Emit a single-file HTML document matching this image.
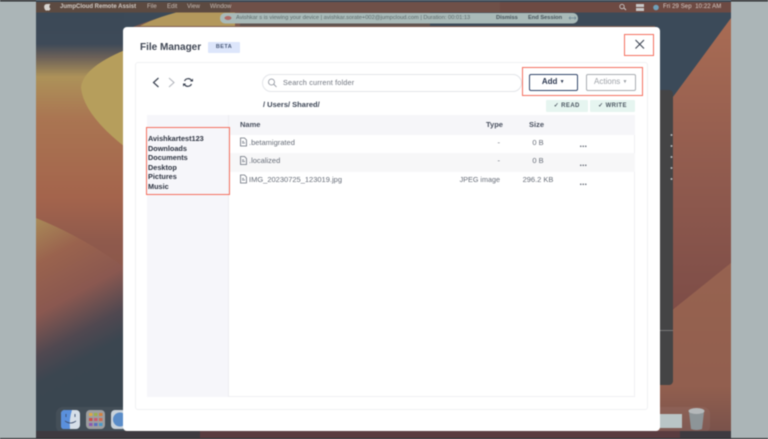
<!DOCTYPE html>
<html><head><meta charset="utf-8"><style>
html,body{margin:0;padding:0;width:768px;height:439px;overflow:hidden;background:#abb5b7}
#r{position:relative;width:768px;height:439px;overflow:hidden;font-family:"Liberation Sans",sans-serif;filter:blur(.45px);background:#abb5b7}
.a{position:absolute;white-space:nowrap}
.box{position:absolute;border:1.5px solid #f4705f;box-sizing:border-box}
</style></head><body><div id="r">
<svg class="a" style="left:0;top:0" width="768" height="439" viewBox="0 0 768 439">
<defs>
<linearGradient id="l" x1="0" y1="0" x2="0" y2="1">
<stop offset="0" stop-color="#3a4957"/><stop offset=".10" stop-color="#3e4a58"/><stop offset=".13" stop-color="#6b6058"/><stop offset=".175" stop-color="#ad9259"/><stop offset=".27" stop-color="#aa7552"/><stop offset=".45" stop-color="#a4644c"/><stop offset=".55" stop-color="#8f5a4c"/><stop offset="1" stop-color="#7a4c48"/>
</linearGradient>
<linearGradient id="w" x1="0" y1="0" x2=".22" y2="1">
<stop offset="0" stop-color="#a98a58"/><stop offset=".2" stop-color="#9a634e"/><stop offset=".42" stop-color="#8a5850"/><stop offset=".6" stop-color="#504850"/><stop offset=".72" stop-color="#3b4650"/><stop offset="1" stop-color="#3a4650"/>
</linearGradient>
<linearGradient id="rg" x1="0" y1="0" x2="0" y2="1">
<stop offset="0" stop-color="#a96c54"/><stop offset=".55" stop-color="#8f5a4e"/><stop offset="1" stop-color="#7c4c47"/>
</linearGradient>
<linearGradient id="rb" x1="0" y1="0" x2="0" y2="1">
<stop offset="0" stop-color="#976350"/><stop offset=".7" stop-color="#925f4f"/><stop offset="1" stop-color="#75504a"/>
</linearGradient>
</defs>
<rect width="768" height="439" fill="#abb5b7"/>
<rect x="0" y="0" width="768" height="1.5" fill="#2a2a2c"/>
<rect x="36" y="0" width="695" height="439" fill="url(#l)"/>
<path d="M36 218 Q85 238 125 268 L125 439 L36 439Z" fill="url(#w)"/>
<path d="M125 50 Q82 68 81 88 Q84 115 125 147Z" fill="#b69e5c"/>
<path d="M125 12 H730 V20 L673 97 L660 115 V430 H125Z" fill="#7f5b4e"/>
<rect x="240" y="12" width="490" height="14" fill="#5f5350"/>
<path d="M430 12 H731 V26 H430Z" fill="#3c4a58"/>
<path d="M125 12 H178 Q150 20 125 30Z" fill="#3c4a58"/>
<path d="M178 12 H235 V26 H140 Q155 18 178 12Z" fill="#b3985c"/>
<path d="M731 12 V18 L673 97 L655 100 V26 H660 V12Z" fill="#3b4a59"/>
<path d="M731 18 V263 L660 320 V115Z" fill="url(#rg)"/>
<path d="M731 263 V439 H660 V320Z" fill="url(#rb)"/>
<rect x="36" y="2" width="695" height="10.5" fill="#6f5048"/>
<path d="M36 2 H230 V12.5 H36Z" fill="#5c4a41"/>
<path d="M500 2 H731 V12.5 H500Z" fill="#6d4a43"/>
<rect x="650" y="90" width="23" height="295" rx="4" fill="#444445"/>
<g fill="#b9bcbf"><circle cx="671.5" cy="135" r="1"/><circle cx="671.5" cy="146" r="1"/><circle cx="671.5" cy="157" r="1"/><circle cx="671.5" cy="168" r="1"/><circle cx="671.5" cy="179" r="1"/></g>
<rect x="650" y="330" width="23" height="1" fill="#777"/>
<rect x="56" y="407" width="654" height="26" rx="7" fill="#fff" opacity=".05"/>
<rect x="61" y="410" width="19" height="19" rx="4" fill="#d6dfe8"/>
<path d="M61 414 q0 -4 4 -4 h7 q-3 9 -2 19 h-6 q-3 0 -3 -3Z" fill="#5a90dc"/>
<path d="M65 421 q5.500 4 11 0" fill="none" stroke="#3c4f70" stroke-width=".8"/>
<path d="M66 414 v3 M75 414 v3" stroke="#3c4f70" stroke-width=".9"/>
<rect x="86" y="410" width="19" height="19" rx="4" fill="#9d9ea0"/>
<g><rect x="89" y="413" width="3.5" height="3" fill="#d8a945"/><rect x="94" y="413" width="3.5" height="3" fill="#9ab04c"/><rect x="99" y="413" width="3.5" height="3" fill="#d2813f"/><rect x="89" y="418" width="3.5" height="3" fill="#c8504a"/><rect x="94" y="418" width="3.5" height="3" fill="#c85a70"/><rect x="99" y="418" width="3.5" height="3" fill="#d06a50"/><rect x="89" y="423" width="3.5" height="3" fill="#8a5ab0"/><rect x="94" y="423" width="3.5" height="3" fill="#5a70c0"/><rect x="99" y="423" width="3.5" height="3" fill="#4a9ac8"/></g>
<rect x="111" y="410" width="15" height="19" rx="4" fill="#c9d2da"/><circle cx="120" cy="419.5" r="7" fill="#5a8cc8"/>
<circle cx="70" cy="434" r=".8" fill="#bbb"/>
<rect x="655" y="414" width="27" height="14" fill="#b9c5c6"/>
<path d="M689 412 h15 l-2 17 q-5.500 2 -11 0Z" fill="#8d9598"/><ellipse cx="696.500" cy="411" rx="8" ry="3" fill="#b4b8ba"/>
<rect x="36" y="431" width="695" height="7" fill="#3e3a40"/>
<rect x="200" y="431" width="480" height="7" fill="#5a3c40"/>
<rect x="0" y="438" width="768" height="1" fill="#2a2a2c"/>
<path d="M48 4 q-2 -.2 -3 .6 q-1.500 1.500 -.5 4 q1 2.400 2 2 q1 -.4 2 0 q1 .4 2 -2 q-1.500 -1 -1 -2.800 q.3 -1 1 -1.400 q-1 -.8 -2.500 -.4Z" fill="#d8d4d0"/>
<rect x="220" y="13" width="358" height="10.500" rx="5" fill="#a9bab8"/>
<ellipse cx="228" cy="18" rx="3.500" ry="2" fill="#b06a66"/>
</svg>

<div class="a" style="left:60px;top:3px;font-size:6px;font-weight:bold;line-height:8px;color:#cfc9c4">JumpCloud Remote Assist</div>
<div class="a" style="left:147px;top:3px;font-size:6px;line-height:8px;color:#c6bcb6">File</div>
<div class="a" style="left:167px;top:3px;font-size:6px;line-height:8px;color:#c6bcb6">Edit</div>
<div class="a" style="left:187px;top:3px;font-size:6px;line-height:8px;color:#c6bcb6">View</div>
<div class="a" style="left:210px;top:3px;font-size:6px;line-height:8px;color:#c6bcb6">Window</div>
<div class="a" style="left:663px;top:3px;font-size:6px;line-height:8px;color:#d8cfca;letter-spacing:.1px">Fri 29 Sep&nbsp; 10:22 AM</div>
<svg class="a" style="left:618px;top:3px" width="44" height="9"><circle cx="4" cy="3.500" r="2.200" fill="none" stroke="#ccc" stroke-width=".8"/><path d="M6 5 L8 7" stroke="#ccc"/><rect x="18" y="1" width="8" height="3" fill="#c8c8c8"/><rect x="18" y="5" width="8" height="3" fill="#c8c8c8"/><circle cx="38" cy="4.500" r="2.800" fill="#6f9fb8"/></svg>

<div class="a" style="left:236px;top:14px;font-size:5.700px;line-height:8px;color:#5d6b6c">Avishkar s is viewing your device | avishkar.sorate+002@jumpcloud.com | Duration: 00:01:13</div>
<div class="a" style="left:496px;top:14px;font-size:5.700px;font-weight:bold;line-height:8px;color:#46535a">Dismiss</div>
<div class="a" style="left:528px;top:14px;font-size:5.700px;font-weight:bold;line-height:8px;color:#46535a">End Session</div>
<svg class="a" style="left:568px;top:15px" width="9" height="6"><path d="M1 3 H8 M1 3 l1.500 -1.500 M1 3 l1.500 1.500 M8 3 l-1.500 -1.500 M8 3 l-1.500 1.500" stroke="#6d8794" stroke-width=".7" fill="none"/></svg>

<div class="a" style="left:122.500px;top:26.500px;width:537.500px;height:404px;background:#fff;border-radius:4px"></div>
<div class="a" style="left:140px;top:41px;font-size:10px;font-weight:bold;line-height:13px;color:#3f4654">File Manager</div>
<div class="a" style="left:208px;top:42px;width:32px;height:11px;background:#dde6fb;border-radius:1px;font-size:5.500px;font-weight:bold;line-height:11px;text-align:center;letter-spacing:.4px;color:#4a5a78">BETA</div>
<svg class="a" style="left:624px;top:34px" width="30" height="21"><path d="M11.500 6 L20 14.500 M20 6 L11.500 14.500" stroke="#3e4654" stroke-width="1.100"/></svg>
<div class="box" style="left:624px;top:34px;width:30px;height:21.500px"></div>

<div class="a" style="left:135px;top:61.500px;width:513px;height:348px;border:1px solid #f0f1f3;border-radius:3px;box-sizing:border-box"></div>

<svg class="a" style="left:150px;top:76px" width="48" height="13">
<path d="M8.500 2 L3.500 6.500 L8.500 11" fill="none" stroke="#3c4352" stroke-width="1.200"/>
<path d="M19 2 L24 6.500 L19 11" fill="none" stroke="#b4b7bd" stroke-width="1.100"/>
<path d="M34.500 5 A4 4 0 0 1 41.500 4.500 M41.500 8 A4 4 0 0 1 34.500 8.500" fill="none" stroke="#3c4352" stroke-width="1.200"/>
<path d="M40 5.500 L43 5.500 L43 2.500Z M36 7.500 L33 7.500 L33 10.500Z" fill="#3c4352"/>
</svg>

<div class="a" style="left:262px;top:74px;width:260px;height:17.500px;border:1px solid #e3e5e9;border-radius:9px;box-sizing:border-box"></div>
<svg class="a" style="left:267px;top:78px" width="11" height="10"><circle cx="4.500" cy="4" r="3" fill="none" stroke="#8a8f99" stroke-width=".8"/><path d="M6.800 6.300 L9.500 9" stroke="#8a8f99" stroke-width=".8"/></svg>
<div class="a" style="left:283px;top:78px;font-size:7.300px;line-height:10px;color:#70757f;letter-spacing:.15px">Search current folder</div>

<div class="a" style="left:529px;top:74px;width:48.500px;height:16.500px;border:1.300px solid #33476b;border-radius:2px;box-sizing:border-box;font-size:8px;font-weight:bold;line-height:14px;text-align:center;color:#2e3a52">Add <span style="font-size:5px;vertical-align:1px">▼</span></div>
<div class="a" style="left:586px;top:74px;width:49.500px;height:16.500px;border:1.300px solid #a9adb2;border-radius:2px;box-sizing:border-box;font-size:8px;line-height:14px;text-align:center;color:#9ea2a8">Actions <span style="font-size:5px;vertical-align:1px">▼</span></div>
<div class="box" style="left:522px;top:67px;width:121px;height:29px"></div>

<div class="a" style="left:546px;top:99.500px;width:41.500px;height:12px;background:#e6f5f0;border-radius:1px;font-size:6px;font-weight:bold;line-height:12px;text-align:center;letter-spacing:.4px;color:#4a5560">✓ READ</div>
<div class="a" style="left:590px;top:99.500px;width:45px;height:12px;background:#e6f5f0;border-radius:1px;font-size:6px;font-weight:bold;line-height:12px;text-align:center;letter-spacing:.4px;color:#4a5560">✓ WRITE</div>

<div class="a" style="left:263px;top:100px;font-size:7.500px;font-weight:bold;line-height:10px;color:#3d4656">/ Users/ Shared/</div>

<div class="a" style="left:147px;top:115px;width:488px;height:282px;border:1px solid #f0f0f3;box-sizing:border-box"></div>
<div class="a" style="left:147px;top:115px;width:82px;height:282px;background:#f6f6fa;border-right:1px solid #eeeef2;box-sizing:border-box"></div>
<div class="a" style="left:229px;top:115px;width:406px;height:19.500px;background:#f6f6f9"></div>
<div class="a" style="left:229px;top:153px;width:406px;height:19px;background:#f7f7f8"></div>

<div class="a" style="left:240px;top:120px;font-size:7.500px;font-weight:bold;line-height:10px;color:#4a5160">Name</div>
<div class="a" style="left:486px;top:120px;font-size:7.500px;font-weight:bold;line-height:10px;color:#4a5160">Type</div>
<div class="a" style="left:529px;top:120px;font-size:7.500px;font-weight:bold;line-height:10px;color:#4a5160">Size</div>

<svg class="a" style="left:239px;top:137px" width="9" height="60"><g fill="none" stroke="#6a707c" stroke-width=".8"><path d="M1.500 1 H5.500 L7.500 3 V9 H1.500Z M3 6 H6 M3 4.500 H5"/><path d="M1.500 19.500 H5.500 L7.500 21.500 V27.500 H1.500Z M3 24.500 H6 M3 23 H5"/><path d="M1.500 38 H5.500 L7.500 40 V46 H1.500Z M3 43 H6 M3 41.500 H5"/></g></svg>

<div class="a" style="left:249px;top:137.500px;font-size:7.500px;line-height:10px;color:#676d78">.betamigrated</div>
<div class="a" style="left:249px;top:156px;font-size:7.500px;line-height:10px;color:#676d78">.localized</div>
<div class="a" style="left:249px;top:174.500px;font-size:7.500px;line-height:10px;color:#676d78">IMG_20230725_123019.jpg</div>

<div class="a" style="left:400px;top:137.500px;width:100px;text-align:right;font-size:7.500px;line-height:10px;color:#676d78">-</div>
<div class="a" style="left:400px;top:156px;width:100px;text-align:right;font-size:7.500px;line-height:10px;color:#676d78">-</div>
<div class="a" style="left:400px;top:174.500px;width:100px;text-align:right;font-size:7.200px;line-height:10px;color:#676d78">JPEG image</div>

<div class="a" style="left:508px;top:137.500px;width:60px;text-align:center;font-size:7.500px;line-height:10px;color:#676d78">0 B</div>
<div class="a" style="left:508px;top:156px;width:60px;text-align:center;font-size:7.500px;line-height:10px;color:#676d78">0 B</div>
<div class="a" style="left:508px;top:174.500px;width:60px;text-align:center;font-size:7.500px;line-height:10px;color:#676d78">296.2 KB</div>

<div class="a" style="left:579.500px;top:139px;font-size:9px;font-weight:bold;line-height:10px;color:#5a606c">...</div>
<div class="a" style="left:579.500px;top:158px;font-size:9px;font-weight:bold;line-height:10px;color:#5a606c">...</div>
<div class="a" style="left:579.500px;top:177px;font-size:9px;font-weight:bold;line-height:10px;color:#5a606c">...</div>

<div class="a" style="left:148px;top:134px;font-size:7.300px;font-weight:bold;line-height:9.600px;color:#2f3542;white-space:pre">Avishkartest123
Downloads
Documents
Desktop
Pictures
Music</div>
<div class="box" style="left:146px;top:127px;width:84px;height:68px"></div>
</div></body></html>
